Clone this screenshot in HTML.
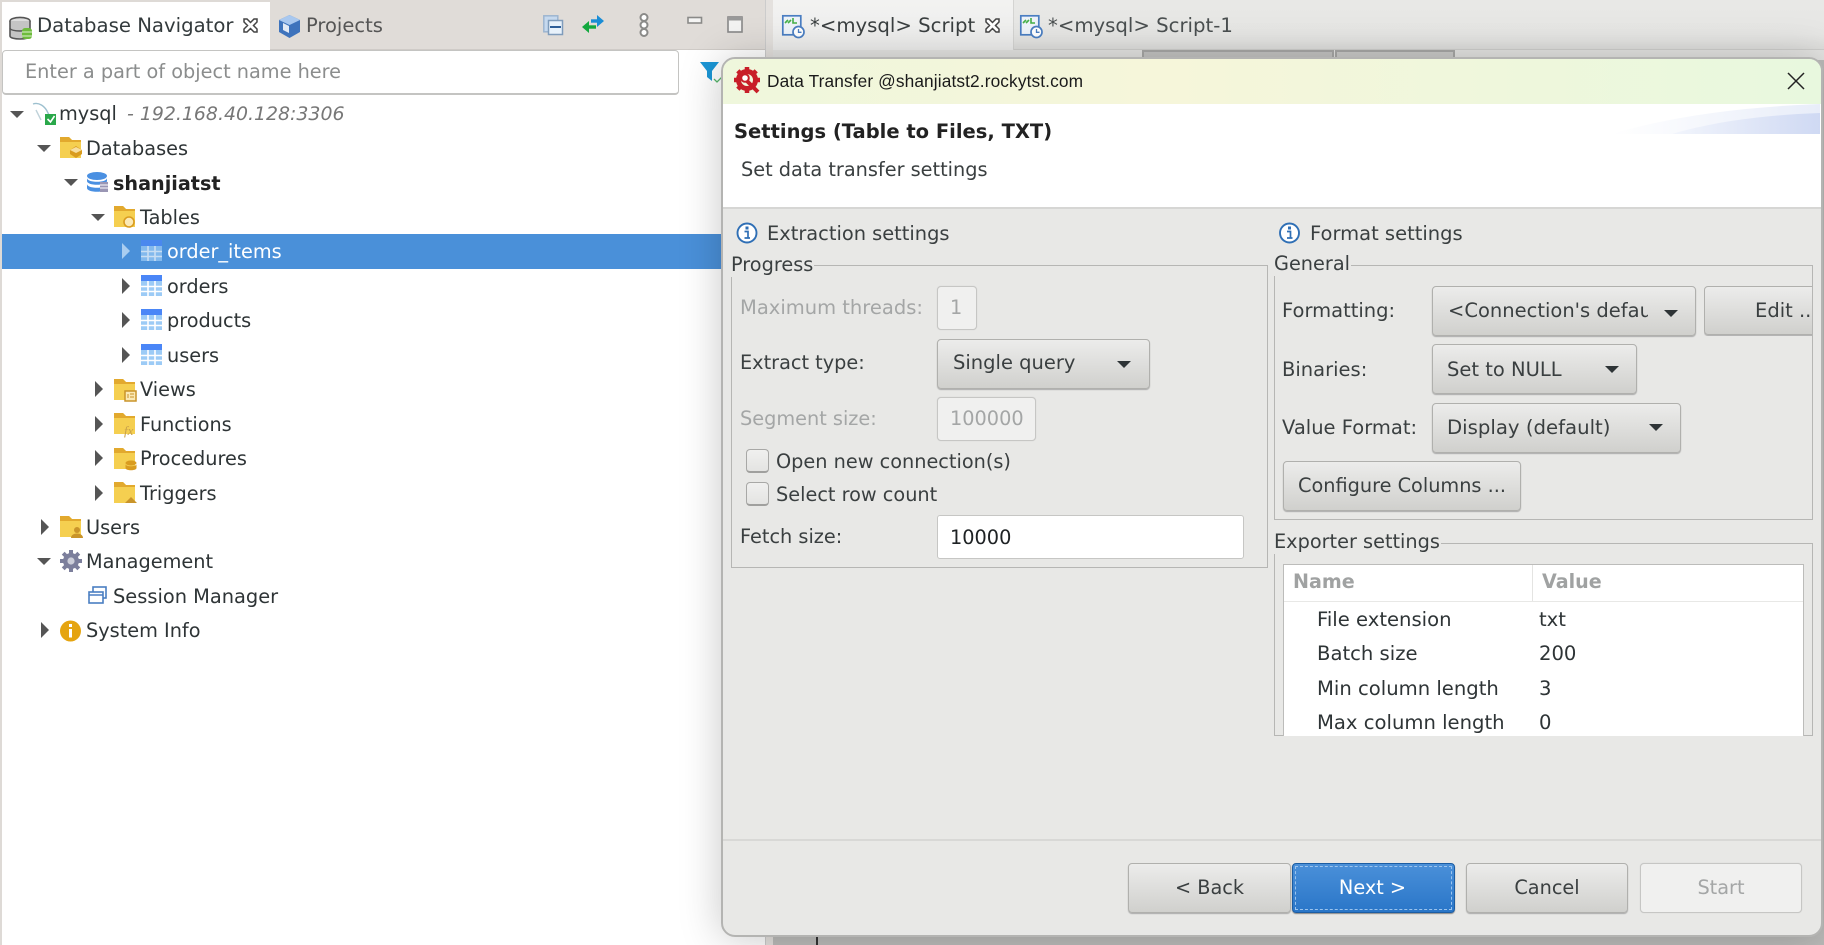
<!DOCTYPE html>
<html><head><meta charset="utf-8"><title>Data Transfer</title>
<style>
html,body{margin:0;padding:0;background:#fff}
body{width:1824px;height:945px;position:relative;overflow:hidden;font-family:"DejaVu Sans","Liberation Sans",sans-serif;font-size:19.3px;color:#2e3436}
#root{position:absolute;left:0;top:0;width:1824px;height:945px;overflow:hidden;filter:blur(.35px)}
.a{position:absolute;box-sizing:border-box}
.t{position:absolute;white-space:pre;line-height:24px;height:24px}
svg{position:absolute;overflow:visible}
.btn{position:absolute;box-sizing:border-box;border:1px solid #b0b0ad;border-radius:4px;background:linear-gradient(#ececeb,#d0d0cd);box-shadow:0 1px 1px #aaa}
.dis{position:absolute;box-sizing:border-box;border:1px solid #c6c6c4;border-radius:4px;background:#f0f0ef;box-shadow:0 0 1px #ccc}
.grp{position:absolute;box-sizing:border-box;border:1px solid #b6b6b4}
.cb{position:absolute;box-sizing:border-box;width:23px;height:24px;border:1px solid #a8a8a6;border-bottom:2px solid #a0a09e;border-radius:4px;background:linear-gradient(#f0f0ef,#e4e4e2)}
.lg{background:#e8e8e6;padding-right:1px}
.g{color:#a4a6a6}
.r{font-size:19.6px}
</style></head><body><div id="root">

<!-- left panel -->
<div class="a" style="left:0;top:0;width:765px;height:945px;background:#fff"></div>
<div class="a" style="left:0;top:0;width:2px;height:945px;background:#dedad6"></div>
<div class="a" style="left:0;top:0;width:765px;height:2px;background:#dedad6"></div>
<div class="a" style="left:270px;top:0;width:495px;height:50px;background:#e0dcd8;border-bottom:1px solid #cfcbc7"></div>
<div class="a" style="left:765px;top:0;width:8px;height:945px;background:#e4e1de;border-left:1px solid #ccc"></div>

<!-- right/editor -->
<div class="a" style="left:773px;top:0;width:1051px;height:945px;background:#bdbdbb"></div>
<div class="a" style="left:773px;top:0;width:1051px;height:50px;background:linear-gradient(#e8e8e6,#e6e6e4 70%,#dededc);border-bottom:1px solid #cfcfcd"></div>
<div class="a" style="left:773px;top:0;width:240px;height:50px;background:linear-gradient(#f2f2f1,#ededec)"></div>
<div class="a" style="left:1013px;top:0;width:1px;height:50px;background:#d4d4d2"></div>
<div class="a" style="left:773px;top:50px;width:1051px;height:10px;background:#e4e4e2"></div>
<div class="a" style="left:1142px;top:50px;width:192px;height:12px;background:#c4c4c2;border:2px solid #a8a8a6"></div>
<div class="a" style="left:1335px;top:50px;width:120px;height:12px;background:#cbcbc9;border:2px solid #a8a8a6"></div>
<div class="a" style="left:773px;top:937px;width:1051px;height:8px;background:#bcbcba"></div>
<div class="a" style="left:816px;top:935px;width:2px;height:10px;background:#333"></div>

<!-- tabs text -->
<div class="t" style="left:37px;top:14px;color:#333a3c;font-size:19.7px">Database Navigator</div>
<div class="t" style="left:306px;top:14px;color:#555;font-size:19.5px">Projects</div>
<div class="t" style="left:810px;top:14px;color:#3a3f40;font-size:19.7px">*&lt;mysql&gt; Script</div>
<div class="t" style="left:1048px;top:14px;color:#4a4f50;font-size:19.7px">*&lt;mysql&gt; Script-1</div>

<!-- search -->
<div class="a" style="left:2px;top:50px;width:677px;height:45px;background:#fff;border:1px solid #c4c4c2;border-bottom:2px solid #c4c4c2;border-radius:4px"></div>
<div class="t" style="left:25px;top:60px;color:#8b8d8d">Enter a part of object name here</div>

<!-- selected row -->
<div class="a" style="left:2px;top:234px;width:763px;height:35px;background:#4a90d9"></div>

<!-- tree text -->
<div class="t" style="left:59px;top:102px;color:#2e3436">mysql</div>
<div class="t" style="left:127px;top:102px;color:#777;font-style:italic;font-size:18.9px">- 192.168.40.128:3306</div>
<div class="t" style="left:86px;top:137px">Databases</div>
<div class="t" style="left:113px;top:172px;font-weight:bold;font-size:19.2px;color:#222">shanjiatst</div>
<div class="t" style="left:140px;top:206px">Tables</div>
<div class="t" style="left:167px;top:240px;color:#fff">order_items</div>
<div class="t" style="left:167px;top:275px">orders</div>
<div class="t" style="left:167px;top:309px">products</div>
<div class="t" style="left:167px;top:344px">users</div>
<div class="t" style="left:140px;top:378px">Views</div>
<div class="t" style="left:140px;top:413px;font-size:19.2px">Functions</div>
<div class="t" style="left:140px;top:447px">Procedures</div>
<div class="t" style="left:140px;top:482px">Triggers</div>
<div class="t" style="left:86px;top:516px">Users</div>
<div class="t" style="left:86px;top:550px">Management</div>
<div class="t" style="left:113px;top:585px;font-size:19.4px">Session Manager</div>
<div class="t" style="left:86px;top:619px">System Info</div>

<!-- left icons -->
<svg width="1824" height="945" style="left:0;top:0">
<defs>
<g id="fo"><path d="M0 21V0h9l3 3h9v18z" fill="#f5cf50"/><path d="M0 4V0h9l3 3h9v2H0z" fill="#e2a92e"/></g>
<g id="tb"><rect x="0" y="0" width="21" height="21" fill="#9ccbf6"/><rect x="0" y="0" width="21" height="6" fill="#4a86f7"/><path d="M7 6v15M14 6v15M0 11.500h21M0 16.500h21" stroke="#fff" stroke-width="1.600"/></g>
<path id="ad" d="M0 0h14l-7 7z" fill="#555"/>
<path id="ar" d="M0 0l8 8-8 8z" fill="#555"/>
<g id="xx"><path d="M1 1l3 0 3.500 3.500 3.500-3.500 3 0 0 3-3.500 3.500 3.500 3.500 0 3-3 0-3.500-3.500-3.500 3.500-3 0 0-3 3.500-3.500-3.500-3.500z" fill="#fff" stroke="#444" stroke-width="1.500"/></g>
<g id="sq"><rect x="0.800" y="0.800" width="18" height="19" fill="#eef3f9" stroke="#4a7ec2" stroke-width="1.700"/><path d="M3 8l3-3M6 8l3-3M11 3v5h4" stroke="#45b048" stroke-width="1.600" fill="none"/><circle cx="16.500" cy="17" r="5.500" fill="#fff" stroke="#4a7ec2" stroke-width="1.700"/><path d="M16.500 14v3.300h3" stroke="#4a7ec2" stroke-width="1.300" fill="none"/></g>
</defs>
<!-- tab icons -->
<g transform="translate(9,17)"><ellipse cx="11" cy="4" rx="10" ry="3.600" fill="#ddd" stroke="#555" stroke-width="1.600"/><path d="M1 4v15c0 4 20 4 20 0V4" fill="#c4c4c4" stroke="#555" stroke-width="1.600"/><path d="M1 11c0 4 20 4 20 0" fill="none" stroke="#555" stroke-width="1.400"/><rect x="13" y="11" width="10" height="11" rx="3" fill="#6dbb3c"/><path d="M13 15h10M13 19h10" stroke="#dff2cf" stroke-width="1"/></g>
<use href="#xx" x="243" y="18"/>
<g transform="translate(279,15)"><path d="M10.500 0L21 5v12l-10.500 6L0 17V5z" fill="#3e73bc"/><path d="M10.500 0L21 5l-10.500 5L0 5z" fill="#a9c8ef"/><path d="M4 8l6 3v7l-6-3z" fill="#fff" opacity=".85"/></g>
<!-- toolbar -->
<g transform="translate(543,15)"><rect x="0.800" y="0.800" width="14" height="16" fill="#c6d9ee" stroke="#9db5d0" stroke-width="1.500"/><rect x="5.500" y="5.500" width="14" height="14" fill="#e8f2fb" stroke="#7f9cbb" stroke-width="1.500"/><rect x="7" y="11" width="11" height="2" fill="#2f5f98"/></g>
<path d="M591 21h9" stroke="#1a8dd6" stroke-width="3.400"/><path d="M597 15l7 6-7 6z" fill="#1a8dd6"/>
<path d="M587 27h9" stroke="#13a83e" stroke-width="3.400"/><path d="M589 21l-7 6 7 6z" fill="#13a83e"/>
<g fill="#fff" stroke="#8a8a88" stroke-width="2"><circle cx="644" cy="17.500" r="3.500"/><circle cx="644" cy="25" r="3.500"/><circle cx="644" cy="32.500" r="3.500"/></g>
<rect x="688" y="17.500" width="13.500" height="5.500" fill="#f5f5f4" stroke="#8a8a88" stroke-width="1.600"/>
<rect x="728" y="17" width="14" height="15" fill="#f3f3f2" stroke="#888" stroke-width="1.600"/><rect x="728" y="17" width="14" height="3.500" fill="#999"/>
<!-- editor tab icons -->
<use href="#sq" x="782" y="15"/><use href="#sq" x="1020" y="15"/>
<use href="#xx" x="985" y="18"/>
<!-- filter -->
<path d="M700 62h19l-7 9v10l-5-4v-6z" fill="#1b96d6"/><path d="M714 79l3 3 5-5" stroke="#55b56a" fill="none" stroke-width="1.300"/>

<!-- arrows -->
<g transform="translate(10,111)"><use href="#ad"/></g>
<g transform="translate(37,145)"><use href="#ad"/></g>
<g transform="translate(64,179)"><use href="#ad"/></g>
<g transform="translate(91,214)"><use href="#ad"/></g>
<path d="M122 243l8 8-8 8z" fill="#a9cdf0"/>
<g transform="translate(122,278)"><use href="#ar"/></g>
<g transform="translate(122,312)"><use href="#ar"/></g>
<g transform="translate(122,347)"><use href="#ar"/></g>
<g transform="translate(95,381)"><use href="#ar"/></g>
<g transform="translate(95,416)"><use href="#ar"/></g>
<g transform="translate(95,450)"><use href="#ar"/></g>
<g transform="translate(95,485)"><use href="#ar"/></g>
<g transform="translate(41,519)"><use href="#ar"/></g>
<g transform="translate(37,558)"><use href="#ad"/></g>
<g transform="translate(41,622)"><use href="#ar"/></g>

<!-- mysql icon -->
<path d="M33 104c6-2 12 2 15 9l2 4" stroke="#9dc0cf" fill="none" stroke-width="1.400"/><path d="M36 110c2 4 3 6 5 10" stroke="#c0d2da" fill="none" stroke-width="1.400"/>
<rect x="45" y="114" width="11" height="11" fill="#2aa84a"/><path d="M47.500 119l3 3 4-6" stroke="#fff" stroke-width="1.600" fill="none"/>
<!-- folders -->
<use href="#fo" x="60" y="137"/><path d="M70 150l6-4 6 4v4l-6 4-6-4z" fill="#d99c20"/><path d="M70 150l6 3 6-3-6-3z" fill="#f7dfa0"/>
<!-- db blue -->
<g><ellipse cx="97" cy="176" rx="10" ry="4" fill="#4a90e2"/><path d="M87 178c0 5 20 5 20 0v3c0 5-20 5-20 0z" fill="#4a90e2"/><path d="M87 184c0 5 20 5 20 0v4c0 5-20 5-20 0z" fill="#4a90e2"/><rect x="100" y="182" width="8" height="10" fill="#9a96b4"/><path d="M100 185h8M100 188h8" stroke="#fff" stroke-width="1"/></g>
<use href="#fo" x="114" y="206"/><circle cx="129" cy="222" r="5" fill="#fbe9b5" stroke="#d99c20" stroke-width="1.600"/>
<!-- tables -->
<g opacity=".7"><use href="#tb" x="141" y="240"/></g>
<use href="#tb" x="141" y="275"/><use href="#tb" x="141" y="309"/><use href="#tb" x="141" y="344"/>
<use href="#fo" x="114" y="379"/><rect x="125" y="391" width="11" height="10" fill="#fbe9b5" stroke="#c9942a" stroke-width="1.500"/><path d="M128 394v4M130 394h4M130 397h4" stroke="#c9942a"/>
<use href="#fo" x="114" y="413"/><text x="124" y="435" font-family="Liberation Serif,serif" font-style="italic" font-size="13" fill="#c9a24a">fx</text>
<use href="#fo" x="114" y="448"/><ellipse cx="131" cy="463" rx="5.500" ry="2.500" fill="#d99c20"/><path d="M125.500 464v4c0 3 11 3 11 0v-4c0 3-11 3-11 0z" fill="#d99c20"/>
<use href="#fo" x="114" y="482"/><path d="M125 503l6-6 6 6z" fill="#c9942a"/>
<use href="#fo" x="60" y="516"/><circle cx="77" cy="530" r="3" fill="#c9942a"/><path d="M71 538c0-6 12-6 12 0z" fill="#c9942a"/>
<!-- gear mgmt -->
<g transform="translate(71,561)"><circle r="8" fill="#7c7f9c"/><circle r="3.600" fill="#ccced9"/><g stroke="#7c7f9c" stroke-width="4"><path d="M0-11V-7M0 7V11M-11 0H-7M7 0H11M-7.800-7.800L-5-5M5 5L7.800 7.800M-7.800 7.800L-5 5M5-5L7.800-7.800"/></g></g>
<!-- session -->
<rect x="93" y="587" width="13" height="11" fill="#fff" stroke="#4a7ec2" stroke-width="1.600"/><rect x="89" y="592" width="14" height="11" fill="#fff" stroke="#4a7ec2" stroke-width="1.600"/><path d="M89 595h14" stroke="#4a7ec2" stroke-width="1.500"/>
<!-- info -->
<circle cx="70.500" cy="631" r="10.500" fill="#e5a410"/><rect x="69" y="624" width="3" height="3" fill="#fff"/><rect x="69" y="629" width="3" height="8.500" fill="#fff"/>
</svg>

<!-- dialog shadow -->
<div class="a" style="left:721px;top:57px;width:1102px;height:880px;border-radius:14px;box-shadow:0 2px 42px rgba(0,0,0,.22)"></div>
<!-- dialog -->
<div class="a" style="left:721px;top:57px;width:1102px;height:880px;border-radius:14px;background:#e8e8e6;border:2px solid #b4b4b2;overflow:hidden">
  <div class="a" style="left:0;top:0;width:1100px;height:45px;background:linear-gradient(90deg,#eff7dc 0%,#f6f6da 40%,#e8f8de 100%)"></div>
  <div class="a" style="left:0;top:45px;width:1100px;height:105px;background:#fff;border-bottom:2px solid #d6d6d4"></div>
  <svg width="208" height="30" style="left:889px;top:45px"><defs><linearGradient id="sw" x1="0" x2="1"><stop offset="0" stop-color="#fff"/><stop offset="1" stop-color="#e8edf9"/></linearGradient><linearGradient id="sw2" x1="0" x2="1"><stop offset="0" stop-color="#f2f5fc"/><stop offset="1" stop-color="#cfd9f3"/></linearGradient></defs><path d="M0 30C60 12 130 3 208 0V30z" fill="url(#sw)"/><path d="M60 30C100 18 150 11 208 9V30z" fill="url(#sw2)"/></svg>
  <div class="a" style="left:0;top:780px;width:1100px;height:2px;background:#d8d8d6"></div>
</div>

<!-- title -->
<svg width="30" height="30" viewBox="-15 -15 30 30" style="left:732px;top:65px"><g stroke="#c81e28" fill="none"><circle r="8.500" stroke-width="5"/><path stroke-width="4.500" d="M0-13V-9M0 9V13M-13 0H-9M9 0H13M-9.200-9.200L-6.500-6.500M6.500-6.500L9.200-9.200M-9.200 9.200L-6.500 6.500"/></g><path d="M-4-3L11 12" stroke="#c81e28" stroke-width="4"/><circle cx="-2" cy="-2" r="3.800" fill="#fff" stroke="#c81e28" stroke-width="2"/></svg>
<div class="t" style="left:767px;top:69px;color:#1a1a1a;font-size:17.3px;font-family:'Liberation Sans','DejaVu Sans',sans-serif;letter-spacing:.12px">Data Transfer @shanjiatst2.rockytst.com</div>
<svg width="20" height="20" style="left:1786px;top:71px"><path d="M2 2l16 16M18 2L2 18" stroke="#222" stroke-width="1.500"/></svg>
<div class="t" style="left:734px;top:120px;font-weight:bold;color:#222;font-size:19.5px">Settings (Table to Files, TXT)</div>
<div class="t" style="left:741px;top:158px;color:#3a3f40">Set data transfer settings</div>

<!-- section titles -->
<svg width="1824" height="945" style="left:0;top:0">
<g id="inf"><circle cx="747" cy="233" r="9.500" fill="#fff" stroke="#2f6fb5" stroke-width="1.900"/><rect x="745.500" y="226.500" width="3" height="3" fill="#2f6fb5"/><path d="M744.500 231.500h3.500v6.500h2M744.500 238h5.500" stroke="#2f6fb5" stroke-width="1.700" fill="none"/></g>
<g transform="translate(542.500,0)"><use href="#inf"/></g>
</svg>
<div class="t" style="left:767px;top:222px;color:#3a3f40;font-size:19.4px">Extraction settings</div>
<div class="t" style="left:1310px;top:222px;color:#3a3f40;font-size:19.5px">Format settings</div>

<!-- progress -->
<div class="grp" style="left:731px;top:265px;width:537px;height:303px"></div>
<div class="t lg" style="left:731px;top:253px;color:#3a3f40">Progress</div>
<div class="t g" style="left:740px;top:296px;font-size:19.5px">Maximum threads:</div>
<div class="dis" style="left:937px;top:286px;width:40px;height:44px"></div>
<div class="t g" style="left:950px;top:296px">1</div>
<div class="t" style="left:740px;top:351px;color:#3a3f40">Extract type:</div>
<div class="btn" style="left:937px;top:339px;width:213px;height:50px"></div>
<div class="t" style="left:953px;top:351px;color:#3a3f40;font-size:19.5px">Single query</div>
<div class="t g" style="left:740px;top:407px">Segment size:</div>
<div class="dis" style="left:937px;top:397px;width:99px;height:44px"></div>
<div class="t g" style="left:950px;top:407px">100000</div>
<div class="cb" style="left:746px;top:449px"></div>
<div class="t" style="left:776px;top:450px;color:#3a3f40">Open new connection(s)</div>
<div class="cb" style="left:746px;top:482px"></div>
<div class="t" style="left:776px;top:483px;color:#3a3f40">Select row count</div>
<div class="t" style="left:740px;top:525px;color:#3a3f40">Fetch size:</div>
<div class="a" style="left:937px;top:515px;width:307px;height:44px;background:#fff;border:1px solid #c6c6c4;border-radius:3px"></div>
<div class="t" style="left:950px;top:526px;color:#1e2224">10000</div>

<!-- general -->
<div class="grp" style="left:1274px;top:265px;width:539px;height:255px"></div>
<div class="t lg" style="left:1274px;top:252px;color:#3a3f40">General</div>
<div class="t" style="left:1282px;top:299px;color:#3a3f40;font-size:19.5px">Formatting:</div>
<div class="btn" style="left:1432px;top:286px;width:264px;height:50px"></div>
<div class="a" style="left:1448px;top:299px;width:200px;height:24px;overflow:hidden"><div class="t" style="left:0;top:0;color:#3a3f40;font-size:19.5px">&lt;Connection's default&gt;</div></div>
<div class="a" style="left:1704px;top:286px;width:108px;height:50px;overflow:hidden"><div class="btn" style="left:0;top:0;width:130px;height:49px"></div><div class="t" style="left:51px;top:13px;color:#3a3f40;font-size:19.5px">Edit ...</div></div>
<div class="t" style="left:1282px;top:358px;color:#3a3f40;font-size:19.5px">Binaries:</div>
<div class="btn" style="left:1432px;top:344px;width:205px;height:50px"></div>
<div class="t" style="left:1447px;top:358px;color:#3a3f40;font-size:19.5px">Set to NULL</div>
<div class="t" style="left:1282px;top:416px;color:#3a3f40;font-size:19.5px">Value Format:</div>
<div class="btn" style="left:1432px;top:403px;width:249px;height:50px"></div>
<div class="t" style="left:1447px;top:416px;color:#3a3f40;font-size:19.7px">Display (default)</div>
<div class="btn" style="left:1283px;top:461px;width:238px;height:50px"></div>
<div class="t" style="left:1298px;top:474px;color:#3a3f40">Configure Columns ...</div>

<!-- exporter -->
<div class="grp" style="left:1274px;top:543px;width:539px;height:193px"></div>
<div class="t lg" style="left:1274px;top:530px;color:#3a3f40">Exporter settings</div>
<div class="a" style="left:1283px;top:564px;width:521px;height:172px;background:#fff;border:1px solid #bcbcba;border-bottom:none;overflow:hidden"></div>
<div class="a" style="left:1284px;top:601px;width:519px;height:1px;background:#e8e8e6"></div>
<div class="a" style="left:1532px;top:565px;width:1px;height:36px;background:#e4e4e2"></div>
<div class="t" style="left:1293px;top:570px;font-weight:bold;color:#a0a2a2;font-size:19.1px">Name</div>
<div class="t" style="left:1542px;top:570px;font-weight:bold;color:#a0a2a2;font-size:19.1px">Value</div>
<div class="t r" style="left:1317px;top:608px">File extension</div><div class="t r" style="left:1539px;top:608px">txt</div>
<div class="t r" style="left:1317px;top:642px">Batch size</div><div class="t r" style="left:1539px;top:642px">200</div>
<div class="t r" style="left:1317px;top:677px">Min column length</div><div class="t r" style="left:1539px;top:677px">3</div>
<div class="t r" style="left:1317px;top:711px">Max column length</div><div class="t r" style="left:1539px;top:711px">0</div>

<!-- combo arrows -->
<svg width="1824" height="945" style="left:0;top:0">
<g fill="#2e3436"><path d="M1117 361h14l-7 7z"/><path d="M1664 310h14l-7 7z"/><path d="M1605 366h14l-7 7z"/><path d="M1649 424h14l-7 7z"/></g>
</svg>

<!-- wizard buttons -->
<div class="btn" style="left:1128px;top:863px;width:163px;height:50px"></div>
<div class="t" style="left:1128px;top:876px;width:163px;text-align:center;color:#3a3f40">&lt; Back</div>
<div class="a" style="left:1292px;top:863px;width:163px;height:50px;border-radius:4px;background:linear-gradient(#4a90d9,#2a76c8);border:1px solid #1c5da3;box-shadow:0 1px 1px #888"></div>
<div class="a" style="left:1295px;top:866px;width:157px;height:44px;border:1px dashed #9cc4ee"></div>
<div class="t" style="left:1291px;top:876px;width:163px;text-align:center;color:#fff">Next &gt;</div>
<div class="btn" style="left:1466px;top:863px;width:162px;height:50px"></div>
<div class="t" style="left:1466px;top:876px;width:162px;text-align:center;color:#3a3f40">Cancel</div>
<div class="dis" style="left:1640px;top:863px;width:162px;height:50px;border-radius:4px"></div>
<div class="t g" style="left:1640px;top:876px;width:162px;text-align:center">Start</div>

</div></body></html>
